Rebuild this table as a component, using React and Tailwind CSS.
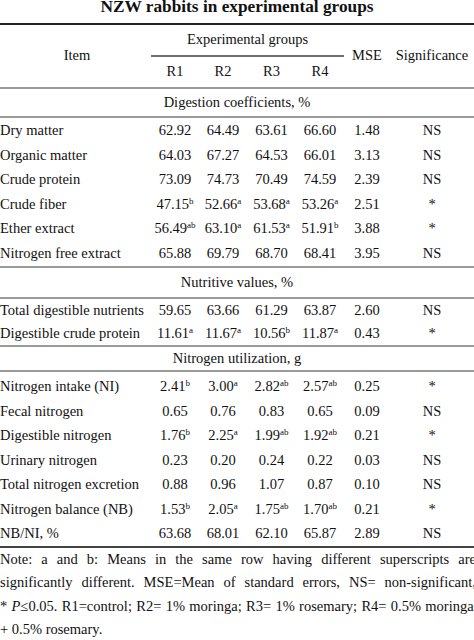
import React from "react";

const cols = "grid grid-cols-[151px_48px_48px_49px_48px_46px_84px]";

const digestion = [
  ["Dry matter", ["62.92"], ["64.49"], ["63.61"], ["66.60"], "1.48", "NS"],
  ["Organic matter", ["64.03"], ["67.27"], ["64.53"], ["66.01"], "3.13", "NS"],
  ["Crude protein", ["73.09"], ["74.73"], ["70.49"], ["74.59"], "2.39", "NS"],
  ["Crude fiber", ["47.15", "b"], ["52.66", "a"], ["53.68", "a"], ["53.26", "a"], "2.51", "*"],
  ["Ether extract", ["56.49", "ab"], ["63.10", "a"], ["61.53", "a"], ["51.91", "b"], "3.88", "*"],
  ["Nitrogen free extract", ["65.88"], ["69.79"], ["68.70"], ["68.41"], "3.95", "NS"],
];

const nutritive = [
  ["Total digestible nutrients", ["59.65"], ["63.66"], ["61.29"], ["63.87"], "2.60", "NS"],
  ["Digestible crude protein", ["11.61", "a"], ["11.67", "a"], ["10.56", "b"], ["11.87", "a"], "0.43", "*"],
];

const nitrogen = [
  ["Nitrogen intake (NI)", ["2.41", "b"], ["3.00", "a"], ["2.82", "ab"], ["2.57", "ab"], "0.25", "*"],
  ["Fecal nitrogen", ["0.65"], ["0.76"], ["0.83"], ["0.65"], "0.09", "NS"],
  ["Digestible nitrogen", ["1.76", "b"], ["2.25", "a"], ["1.99", "ab"], ["1.92", "ab"], "0.21", "*"],
  ["Urinary nitrogen", ["0.23"], ["0.20"], ["0.24"], ["0.22"], "0.03", "NS"],
  ["Total nitrogen excretion", ["0.88"], ["0.96"], ["1.07"], ["0.87"], "0.10", "NS"],
  ["Nitrogen balance (NB)", ["1.53", "b"], ["2.05", "a"], ["1.75", "ab"], ["1.70", "ab"], "0.21", "*"],
  ["NB/NI, %", ["63.68"], ["68.01"], ["62.10"], ["65.87"], "2.89", "NS"],
];

function Value({ v }) {
  return (
    <span className="text-center whitespace-nowrap">
      {v[0]}
      {v[1] && <sup className="text-[9px] top-[-5px]">{v[1]}</sup>}
    </span>
  );
}

function Row({ r, h }) {
  return (
    <div className={`${cols} items-center ${h}`}>
      <span className="whitespace-nowrap">{r[0]}</span>
      {r.slice(1, 5).map((v, i) => (
        <Value key={i} v={v} />
      ))}
      <span className="text-center">{r[5]}</span>
      <span className="text-center">{r[6]}</span>
    </div>
  );
}

function Section({ title, h }) {
  return (
    <div className={`${h} flex items-center justify-center border-b-2 border-[#9a9a9a]`}>
      {title}
    </div>
  );
}

export default function App() {
  return (
    <div className="w-[474px] h-[640px] overflow-hidden bg-white text-[#111] text-[14.5px] [font-family:'Liberation_Serif','Times_New_Roman',serif]">
      <div className="h-[25px] border-b-2 border-[#222] text-center text-[17.3px] font-bold leading-[13px]">
        NZW rabbits in experimental groups
      </div>

      {/* header */}
      <div className={`${cols} h-[64px] border-b-2 border-[#9a9a9a]`}>
        <div className="flex items-center justify-center pl-[3px]">Item</div>
        <div className="col-span-4 flex flex-col">
          <div className="h-[32px] flex items-center justify-center border-b-2 border-[#6f6f6f]">
            Experimental groups
          </div>
          <div className="flex-1 grid grid-cols-[48px_48px_49px_48px] items-center text-center">
            <span>R1</span>
            <span>R2</span>
            <span>R3</span>
            <span>R4</span>
          </div>
        </div>
        <div className="flex items-center justify-center">MSE</div>
        <div className="flex items-center justify-center">Significance</div>
      </div>

      <Section title="Digestion coefficients, %" h="h-[29px]" />
      <div className="pt-[1px] h-[150px] border-b-2 border-[#9a9a9a]">
        {digestion.map((r) => (
          <Row key={r[0]} r={r} h="h-[24.5px]" />
        ))}
      </div>

      <Section title="Nutritive values, %" h="h-[31px]" />
      <div className="h-[48px] border-b-2 border-[#9a9a9a]">
        {nutritive.map((r) => (
          <Row key={r[0]} r={r} h="h-[23px]" />
        ))}
      </div>

      <Section title="Nitrogen utilization, g" h="h-[25px]" />
      <div className="pt-[3px] h-[176px] border-b-2 border-[#444]">
        {nitrogen.map((r) => (
          <Row key={r[0]} r={r} h="h-[24.5px]" />
        ))}
      </div>

      <div className="leading-[23.3px] w-[476px]">
        <div className="flex justify-between whitespace-nowrap">
          {"Note: a and b: Means in the same row having different superscripts are".split(" ").map((w, i) => (
            <span key={i}>{w}</span>
          ))}
        </div>
        <div className="flex justify-between whitespace-nowrap">
          {"significantly different. MSE=Mean of standard errors, NS= non-significant,".split(" ").map((w, i) => (
            <span key={i}>{w}</span>
          ))}
        </div>
        <div className="whitespace-nowrap [word-spacing:0.7px]">
          * <i>P</i>≤0.05. R1=control; R2= 1% moringa; R3= 1% rosemary; R4= 0.5% moringa
        </div>
        <div>+ 0.5% rosemary.</div>
      </div>
    </div>
  );
}
